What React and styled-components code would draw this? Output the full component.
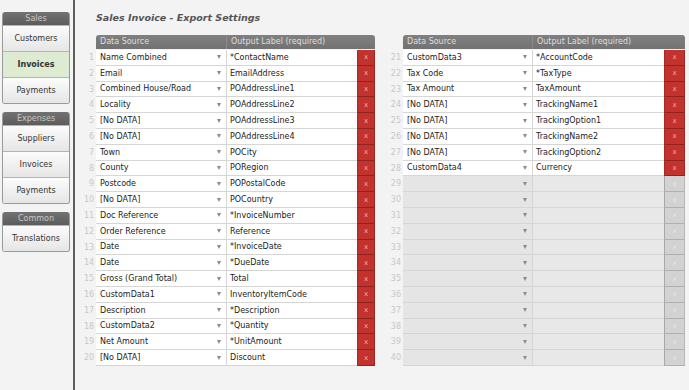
import React from 'react'
import styled, { createGlobalStyle } from 'styled-components'

const GlobalStyle = createGlobalStyle`
  html, body {
    margin: 0;
    padding: 0;
    background: #f3f3f3;
    font-family: "DejaVu Sans", Verdana, sans-serif;
  }
`

const leftRows = [
  ['Name Combined', '*ContactName'],
  ['Email', 'EmailAddress'],
  ['Combined House/Road', 'POAddressLine1'],
  ['Locality', 'POAddressLine2'],
  ['[No DATA]', 'POAddressLine3'],
  ['[No DATA]', 'POAddressLine4'],
  ['Town', 'POCity'],
  ['County', 'PORegion'],
  ['Postcode', 'POPostalCode'],
  ['[No DATA]', 'POCountry'],
  ['Doc Reference', '*InvoiceNumber'],
  ['Order Reference', 'Reference'],
  ['Date', '*InvoiceDate'],
  ['Date', '*DueDate'],
  ['Gross (Grand Total)', 'Total'],
  ['CustomData1', 'InventoryItemCode'],
  ['Description', '*Description'],
  ['CustomData2', '*Quantity'],
  ['Net Amount', '*UnitAmount'],
  ['[No DATA]', 'Discount'],
]

const rightRows = [
  ['CustomData3', '*AccountCode'],
  ['Tax Code', '*TaxType'],
  ['Tax Amount', 'TaxAmount'],
  ['[No DATA]', 'TrackingName1'],
  ['[No DATA]', 'TrackingOption1'],
  ['[No DATA]', 'TrackingName2'],
  ['[No DATA]', 'TrackingOption2'],
  ['CustomData4', 'Currency'],
  ...Array.from({ length: 12 }, () => null),
]

const nav = [
  { title: 'Sales', items: ['Customers', 'Invoices', 'Payments'], active: 'Invoices' },
  { title: 'Expenses', items: ['Suppliers', 'Invoices', 'Payments'] },
  { title: 'Common', items: ['Translations'] },
]

const Page = styled.div`
  display: flex;
  height: 390px;
  overflow: hidden;
`

const Sidebar = styled.nav`
  width: 71px;
  padding: 12px 0 0 2px;
  border-right: 2px solid #5e5e5e;
  display: flex;
  flex-direction: column;
  gap: 8px;
`

const NavGroup = styled.div`
  width: 68px;
  border: 1px solid #9a9a9a;
  border-top: none;
  border-radius: 3px;
  overflow: hidden;
  box-sizing: border-box;
`

const NavHeader = styled.div`
  height: 13px;
  line-height: 13px;
  text-align: center;
  font-size: 8px;
  color: #c8c8c8;
  background: linear-gradient(#727272, #5c5c5c);
`

const NavButton = styled.div`
  height: 26px;
  display: flex;
  align-items: center;
  justify-content: center;
  font-size: 8px;
  color: #333;
  font-weight: ${p => (p.$active ? 'bold' : 'normal')};
  background: ${p => (p.$active ? '#dcebd2' : 'linear-gradient(#fbfbfb, #e6e6e6)')};
  border-top: 1px solid #b4b4b4;
  box-sizing: border-box;
`

const Main = styled.main`
  flex: 1;
  padding: 10px 0 0 9px;
`

const Title = styled.h1`
  margin: 0 0 10px 12px;
  font-size: 9.5px;
  line-height: 15px;
  font-weight: bold;
  font-style: italic;
  color: #555;
`

const Tables = styled.div`
  display: flex;
  gap: 13px;
`

const Grid = styled.div`
  display: grid;
  grid-template-columns: ${p => p.$cols};
  grid-auto-rows: 15.8px;
  grid-template-rows: 15px;
`

const NumCell = styled.div`
  font-size: 8px;
  color: #c8c8c8;
  text-align: right;
  padding-right: 2px;
  line-height: 15px;
`

const HeadCell = styled.div`
  grid-column: ${p => p.$span};
  background: linear-gradient(#808080, #727272);
  color: #dedede;
  font-size: 8px;
  line-height: 14px;
  height: 14px;
  padding-left: 4px;
  border-radius: ${p => (p.$first ? '3px 0 0 0' : '0 3px 0 0')};
  border-left: ${p => (p.$first ? 'none' : '1px solid #8c8c8c')};
`

const SourceCell = styled.div`
  display: flex;
  align-items: center;
  justify-content: space-between;
  padding: 0 5px 0 4px;
  font-size: 8px;
  color: #222;
  background: ${p => (p.$empty ? '#e5e5e5' : '#fff')};
  border-bottom: 1px solid #d6d6d6;
`

const Arrow = styled.span`
  width: 0;
  height: 0;
  border-left: 2.5px solid transparent;
  border-right: 2.5px solid transparent;
  border-top: 4px solid #8a8a8a;
`

const LabelCell = styled.div`
  display: flex;
  align-items: center;
  padding-left: 3px;
  font-size: 8px;
  color: #222;
  background: ${p => (p.$empty ? '#e8e8e8' : '#fff')};
  border-left: 1px solid #d6d6d6;
  border-bottom: 1px solid #d6d6d6;
`

const RemoveButton = styled.div`
  display: flex;
  align-items: center;
  justify-content: center;
  font-size: 7px;
  color: ${p => (p.$empty ? '#e6e6e6' : '#f2a9a6')};
  background: ${p => (p.$empty ? '#d2d2d2' : '#c3332e')};
  border-left: 1px solid ${p => (p.$empty ? '#a8a8a8' : '#a52a26')};
  border-right: 1px solid ${p => (p.$empty ? '#b8b8b8' : '#9c2723')};
  border-bottom: 1px solid ${p => (p.$empty ? '#b0b0b0' : '#8e2420')};
`

function MappingTable({ rows, start, cols }) {
  return (
    <Grid $cols={cols}>
      <NumCell />
      <HeadCell $first $span="2 / 3">Data Source</HeadCell>
      <HeadCell $span="3 / 5">Output Label (required)</HeadCell>
      {rows.map((row, i) => (
        <React.Fragment key={i}>
          <NumCell>{start + i}</NumCell>
          <SourceCell $empty={!row}>
            <span>{row ? row[0] : ''}</span>
            <Arrow />
          </SourceCell>
          <LabelCell $empty={!row}>{row ? row[1] : ''}</LabelCell>
          <RemoveButton $empty={!row}>x</RemoveButton>
        </React.Fragment>
      ))}
    </Grid>
  )
}

export default function App() {
  return (
    <>
      <GlobalStyle />
      <Page>
        <Sidebar>
          {nav.map(group => (
            <NavGroup key={group.title}>
              <NavHeader>{group.title}</NavHeader>
              {group.items.map(item => (
                <NavButton key={item} $active={item === group.active}>
                  {item}
                </NavButton>
              ))}
            </NavGroup>
          ))}
        </Sidebar>
        <Main>
          <Title>Sales Invoice - Export Settings</Title>
          <Tables>
            <MappingTable rows={leftRows} start={1} cols="12px 130px 131px 18px" />
            <MappingTable rows={rightRows} start={21} cols="15px 129px 132px 21px" />
          </Tables>
        </Main>
      </Page>
    </>
  )
}
